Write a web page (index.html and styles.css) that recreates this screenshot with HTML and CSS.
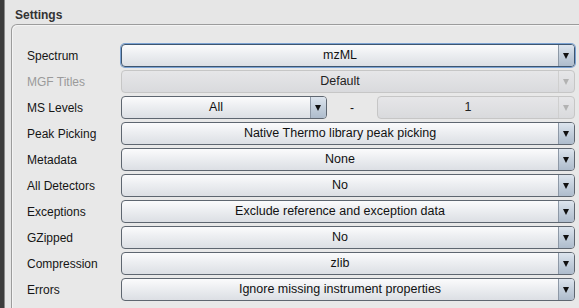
FILE: index.html
```html
<!DOCTYPE html>
<html lang="en">
<head>
  <meta charset="UTF-8">
  <title>Settings</title>
  <link rel="stylesheet" href="styles.css">
</head>
<body>
  <div class="edge"></div>
  <div class="main">
    <div class="title">Settings</div>
    <div class="panel">
      <div class="row">
        <label>Spectrum</label>
        <div class="combo focus"><span>mzML</span><b></b></div>
      </div>
      <div class="row">
        <label class="off">MGF Titles</label>
        <div class="combo disabled"><span>Default</span><b></b></div>
      </div>
      <div class="row">
        <label>MS Levels</label>
        <div class="split">
          <div class="combo"><span>All</span><b></b></div>
          <div class="dash">-</div>
          <div class="combo disabled"><span>1</span><b></b></div>
        </div>
      </div>
      <div class="row">
        <label>Peak Picking</label>
        <div class="combo"><span>Native Thermo library peak picking</span><b></b></div>
      </div>
      <div class="row">
        <label>Metadata</label>
        <div class="combo"><span>None</span><b></b></div>
      </div>
      <div class="row">
        <label>All Detectors</label>
        <div class="combo"><span>No</span><b></b></div>
      </div>
      <div class="row">
        <label>Exceptions</label>
        <div class="combo"><span>Exclude reference and exception data</span><b></b></div>
      </div>
      <div class="row">
        <label>GZipped</label>
        <div class="combo"><span>No</span><b></b></div>
      </div>
      <div class="row">
        <label>Compression</label>
        <div class="combo"><span>zlib</span><b></b></div>
      </div>
      <div class="row">
        <label>Errors</label>
        <div class="combo"><span>Ignore missing instrument properties</span><b></b></div>
      </div>
    </div>
  </div>
</body>
</html>
```

FILE: styles.css
```css
html, body {
  margin: 0;
  height: 100%;
  overflow: hidden;
}

body {
  display: flex;
  background: #e6e6e6;
  font-family: "Liberation Sans", Arial, sans-serif;
  font-size: 12px;
  color: #111;
}

.edge {
  width: 4px;
  background: #3c3c3c;
  border-right: 1px solid #8a8a8a;
}

.main {
  flex: 1;
  min-width: 0;
}

.title {
  margin: 8px 0 0 10px;
  height: 16px;
  line-height: 14px;
  font-weight: bold;
  color: #333;
}

.panel {
  margin: 0 -20px 0 6px;
  border: 1px solid #9c9c9c;
  border-bottom: 0;
  border-radius: 6px 6px 0 0;
  background: #e8e8e8;
  padding: 19px 23px 0 15px;
  box-shadow: inset 1px 1px 0 #f4f4f4;
  height: calc(100vh - 24px);
  box-sizing: border-box;
}

.row {
  display: grid;
  grid-template-columns: 94px 1fr;
  align-items: center;
  height: 23px;
  margin-bottom: 3px;
}

.row label {
  color: #151515;
}

.row label.off {
  color: #9a9a9a;
}

.combo {
  position: relative;
  height: 23px;
  box-sizing: border-box;
  border: 1px solid #5e6670;
  border-radius: 4px;
  background: linear-gradient(#fbfbfc 0%, #eceef1 45%, #dcdfe4 100%);
  display: flex;
  font-size: 12.5px;
}

.combo span {
  flex: 1;
  text-align: center;
  line-height: 21px;
  white-space: nowrap;
  overflow: hidden;
}

.combo b {
  width: 15px;
  border-left: 1px solid #8d98a6;
  border-radius: 0 3px 3px 0;
  background: linear-gradient(#dde5ee 0%, #c3cfdc 50%, #aebccc 100%);
  position: relative;
}

.combo b::after {
  content: "";
  position: absolute;
  left: 4px;
  top: 8px;
  border-left: 3.5px solid transparent;
  border-right: 3.5px solid transparent;
  border-top: 6px solid #111;
}

.combo.focus {
  border-color: #3d5570;
  box-shadow: 0 0 0 1px #7ca3d3;
}

.combo.disabled {
  border-color: #c6c6c6;
  background: linear-gradient(#e6e6e8, #d9dadd);
}

.combo.disabled span {
  color: #222;
}

.combo.disabled b {
  background: none;
  border-left-color: #cfcfcf;
}

.combo.disabled b::after {
  border-top-color: #b2b2b2;
}

.split {
  display: grid;
  grid-template-columns: 206px 50px 1fr;
  align-items: center;
}

.dash {
  text-align: center;
}
```
